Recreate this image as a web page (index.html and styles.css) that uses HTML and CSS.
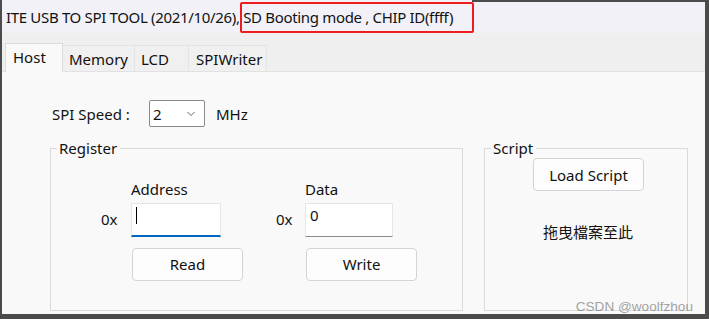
FILE: index.html
```html
<!DOCTYPE html>
<html lang="zh-TW">
<head>
    <meta charset="UTF-8">
    <meta name="viewport" content="width=device-width, initial-scale=1.0">
    <title>ITE USB TO SPI TOOL</title>
    <link rel="stylesheet" href="styles.css">
</head>
<body>
    <div class="window">
        <div class="titlebar">
            <span class="title">ITE USB TO SPI TOOL (2021/10/26), SD Booting mode , CHIP ID(ffff)</span>
            <div class="mark-box"></div>
            <div class="edge-top"></div>
        </div>

        <div class="tabstrip">
            <div class="tab active">Host</div>
            <div class="tab">Memory</div>
            <div class="tab">LCD</div>
            <div class="tab">SPIWriter</div>
        </div>

        <div class="content">
            <div class="speed-row">
                <span class="speed-label">SPI Speed :</span>
                <div class="select">
                    <span>2</span>
                    <svg class="chevron" width="10" height="6" viewBox="0 0 10 6">
                        <path d="M1.5 1 L5 4.5 L8.5 1" fill="none" stroke="#666" stroke-width="1"/>
                    </svg>
                </div>
                <span>MHz</span>
            </div>

            <div class="groups">
                <fieldset class="group register">
                    <legend>Register</legend>
                    <div class="reg-grid">
                        <span></span>
                        <span class="field-label">Address</span>
                        <span></span>
                        <span class="field-label">Data</span>

                        <span class="prefix">0x</span>
                        <div class="input focused"><span class="caret"></span></div>
                        <span class="prefix">0x</span>
                        <div class="input narrow">0</div>

                        <span></span>
                        <button class="btn wide">Read</button>
                        <span></span>
                        <button class="btn wide">Write</button>
                    </div>
                </fieldset>

                <fieldset class="group script">
                    <legend>Script</legend>
                    <button class="btn load">Load Script</button>
                    <div class="drop">拖曳檔案至此</div>
                </fieldset>
            </div>

            <div class="watermark">CSDN @woolfzhou</div>
        </div>
    </div>
</body>
</html>
```

FILE: styles.css
```css
* {
    box-sizing: border-box;
}
html, body {
    margin: 0;
    padding: 0;
}
body {
    font-family: 'Noto Sans', 'Noto Sans CJK TC', sans-serif;
    font-size: 15px;
    color: #111;
    width: 709px;
    height: 319px;
    overflow: hidden;
}
.window {
    height: 319px;
    display: flex;
    flex-direction: column;
    border-left: 2px solid #4b4b4b;
    border-right: 4px solid #4b4b4b;
    border-bottom: 5px solid #4b4b4b;
    position: relative;
}
.titlebar {
    height: 33px;
    background-color: #f3f1f8;
    padding-left: 4px;
    display: flex;
    align-items: center;
    position: relative;
}
.title {
    white-space: nowrap;
    letter-spacing: -0.33px;
}
.mark-box {
    position: absolute;
    left: 238px;
    top: 2px;
    width: 234px;
    height: 31px;
    border: 2px solid #ee1c1c;
    border-radius: 2px;
}
.edge-top {
    position: absolute;
    left: 470px;
    right: 0;
    top: 0;
    height: 2px;
    background-color: #4b4b4b;
}
.tabstrip {
    height: 39px;
    background-color: #efefef;
    display: flex;
    align-items: flex-end;
    padding-left: 3px;
    border-bottom: 1px solid #e2e2e2;
}
.tab {
    height: 26px;
    padding: 0 6px;
    border: 1px solid #e4e4e4;
    border-bottom: none;
    margin-left: -1px;
    display: flex;
    align-items: center;
    background-color: #f0f0f0;
}
.tab:nth-child(2) { width: 73px; }
.tab:nth-child(3) { width: 55px; }
.tab:nth-child(4) { width: 79px; padding-left: 7px; }
.tab.active {
    height: 29px;
    width: 58px;
    margin-left: 0;
    margin-bottom: -1px;
    padding-left: 7px;
    padding-bottom: 3px;
    background-color: #f9f9f9;
    border-color: #dcdcdc;
    position: relative;
}
.content {
    flex: 1;
    background-color: #f9f9f9;
    padding: 28px 0 0 48px;
    position: relative;
}
.speed-row {
    display: flex;
    align-items: center;
    height: 27px;
}
.speed-label {
    margin-left: 2px;
    width: 97px;
}
.select {
    width: 56px;
    height: 27px;
    background-color: #fff;
    border: 1px solid #8a8a8a;
    border-radius: 2px;
    display: flex;
    align-items: center;
    justify-content: space-between;
    padding: 0 8px 0 3px;
    margin-right: 11px;
}
.chevron {
    margin-top: 1px;
}
.groups {
    display: flex;
    margin-top: 11px;
    gap: 21px;
}
.group {
    margin: 0;
    border: 1px solid #dadada;
    padding: 0;
}
.group legend {
    padding: 0 3px 0 2px;
    margin-left: 6px;
    line-height: 20px;
}
.register {
    width: 413px;
    height: 173px;
}
.script {
    width: 204px;
    height: 173px;
    display: flex;
    flex-direction: column;
    align-items: center;
}
.reg-grid {
    display: grid;
    grid-template-columns: 30px 145px 29px 110px;
    grid-template-rows: 20px 34px 32px;
    row-gap: 6px;
    padding: 19px 0 0 50px;
    align-items: center;
}
.reg-grid .field-label {
    margin-bottom: -4px;
}
.reg-grid button {
    margin-top: 10px;
}
.prefix {
    padding-bottom: 2px;
}
.input {
    width: 90px;
    height: 34px;
    background-color: #fff;
    border: 1px solid #e6e6e6;
    border-bottom: 1px solid #8d8d8d;
    padding: 0 4px;
    line-height: 22px;
}
.input.narrow {
    width: 88px;
}
.input.focused {
    border-bottom: 2px solid #0067c0;
}
.caret {
    display: inline-block;
    width: 1px;
    height: 17px;
    background-color: #000;
    margin-top: 3px;
}
.btn {
    font-family: inherit;
    font-size: 15px;
    color: #111;
    background-color: #fdfdfd;
    border: 1px solid #d4d4d4;
    border-radius: 4px;
    height: 33px;
    padding: 0;
}
.btn.wide {
    width: 111px;
    height: 33px;
    margin-left: 1px;
}
.load {
    width: 111px;
    margin-top: 0;
    margin-left: 5px;
}
.drop {
    margin-top: 30px;
    margin-left: 4px;
}
.watermark {
    position: absolute;
    right: 12px;
    bottom: 0;
    font-family: 'Liberation Sans', Arial, sans-serif;
    font-size: 13.6px;
    color: rgba(120, 120, 120, 0.7);
}
```
